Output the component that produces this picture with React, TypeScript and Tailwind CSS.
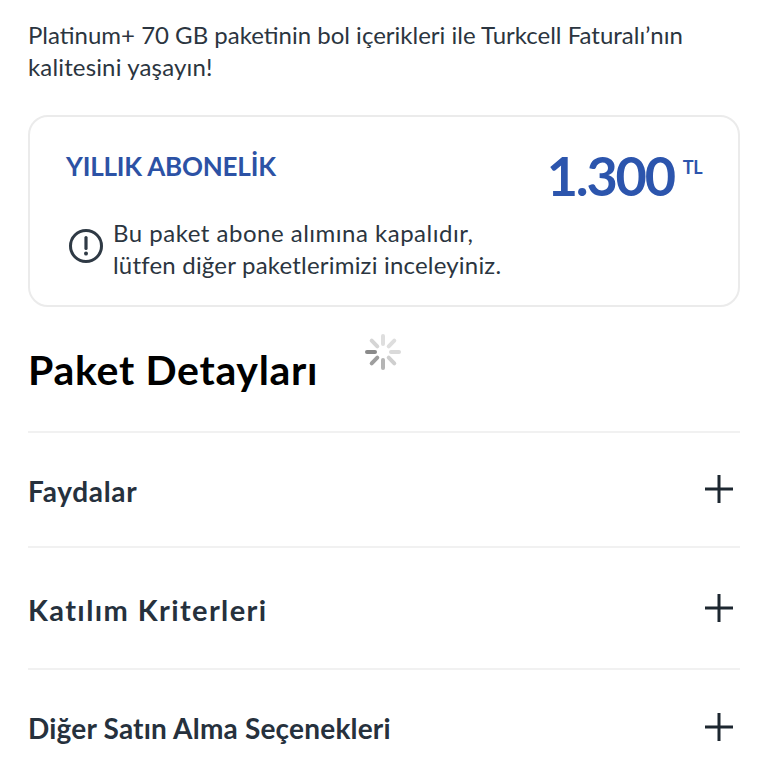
export default function App() {
  return (
    <div className="h-[768px] w-[768px] overflow-hidden bg-white px-[28px] pt-[19px] font-['Lato',sans-serif] text-[#2b3540]">
      <p className="text-[24px] leading-[32px] whitespace-nowrap">
        Platinum+ 70 GB paketinin bol içerikleri ile Turkcell Faturalı’nın
        <br />
        <span className="tracking-[0.15px]">kalitesini yaşayın!</span>
      </p>
      <div className="mt-[32px] h-[192px] w-[712px] rounded-[20px] border-2 border-[#ebebeb] pl-[36px] pr-[36px] pt-[27px]">
        <div className="flex items-start justify-between">
          <span className="text-[26px] leading-[44px] font-bold tracking-[-0.2px] text-[#2c52a5]">YILLIK ABONELİK</span>
          <span className="flex items-start text-[#2c55ad]">
            <span className="text-[54px] leading-[64px] font-bold tracking-[-2.2px]">1.300</span>
            <span className="ml-[9px] mt-[11px] text-[18px] leading-[24px] font-bold tracking-[-0.5px]">TL</span>
          </span>
        </div>
        <div className="mt-[9px] flex items-center gap-[10px]">
          <svg width="36" height="36" viewBox="0 0 36 36" fill="none" className="ml-[2px] mt-[-6px] shrink-0">
            <circle cx="18" cy="18" r="15.5" stroke="#2f3a45" strokeWidth="3" />
            <path d="M18 9.5v11" stroke="#2f3a45" strokeWidth="3.2" strokeLinecap="round" />
            <circle cx="18" cy="25.5" r="2" fill="#2f3a45" />
          </svg>
          <p className="-ml-[1px] text-[24px] leading-[32px] whitespace-nowrap">
            <span className="tracking-[0.5px]">Bu paket abone alımına kapalıdır,</span>
            <br />
            <span className="tracking-[0.2px]">lütfen diğer paketlerimizi inceleyiniz.</span>
          </p>
        </div>
      </div>
      <div className="relative mt-[37px] h-[87px]">
        <h2 className="text-[41px] leading-[52px] font-bold text-black tracking-[0.7px]">Paket Detayları</h2>
        <svg width="36" height="36" viewBox="0 0 36 36" className="absolute left-[337px] top-[-10px]" strokeLinecap="round" strokeWidth="4">
          <path d="M18 2v8" stroke="#dedede" />
          <path d="M29.3 6.7l-5.6 5.6" stroke="#dedede" />
          <path d="M34 18h-8" stroke="#dadada" />
          <path d="M29.3 29.3l-5.6-5.6" stroke="#cfcfcf" />
          <path d="M18 34v-8" stroke="#b5b5b5" />
          <path d="M6.7 29.3l5.6-5.6" stroke="#9e9e9e" />
          <path d="M2 18h8" stroke="#8a8a8a" />
          <path d="M6.7 6.7l5.6 5.6" stroke="#d5d5d5" />
        </svg>
      </div>
      <div className="flex h-[115px] items-center justify-between border-t-2 border-[#f1f1f1] pr-[6px]">
        <span className="mt-[3px] text-[28px] leading-[36px] font-bold text-[#26313d] tracking-[0.7px]">Faydalar</span>
        <svg width="30" height="30" viewBox="0 0 30 30" stroke="#1d2730" strokeWidth="3" className="mb-[2px]">
          <path d="M15 1v28M1 15h28" />
        </svg>
      </div>
      <div className="flex h-[122px] items-center justify-between border-t-2 border-[#f1f1f1] pr-[6px]">
        <span className="mt-[3px] text-[29px] leading-[36px] font-bold text-[#26313d] tracking-[1.4px]">Katılım Kriterleri</span>
        <svg width="30" height="30" viewBox="0 0 30 30" stroke="#1d2730" strokeWidth="3" className="mb-[0px]">
          <path d="M15 1v28M1 15h28" />
        </svg>
      </div>
      <div className="flex h-[118px] items-center justify-between border-t-2 border-[#f1f1f1] pr-[6px]">
        <span className="mb-[1px] text-[28px] leading-[36px] font-bold text-[#26313d] tracking-[0.2px]">Diğer Satın Alma Seçenekleri</span>
        <svg width="30" height="30" viewBox="0 0 30 30" stroke="#1d2730" strokeWidth="3" className="mb-[2px]">
          <path d="M15 1v28M1 15h28" />
        </svg>
      </div>
    </div>
  );
}
